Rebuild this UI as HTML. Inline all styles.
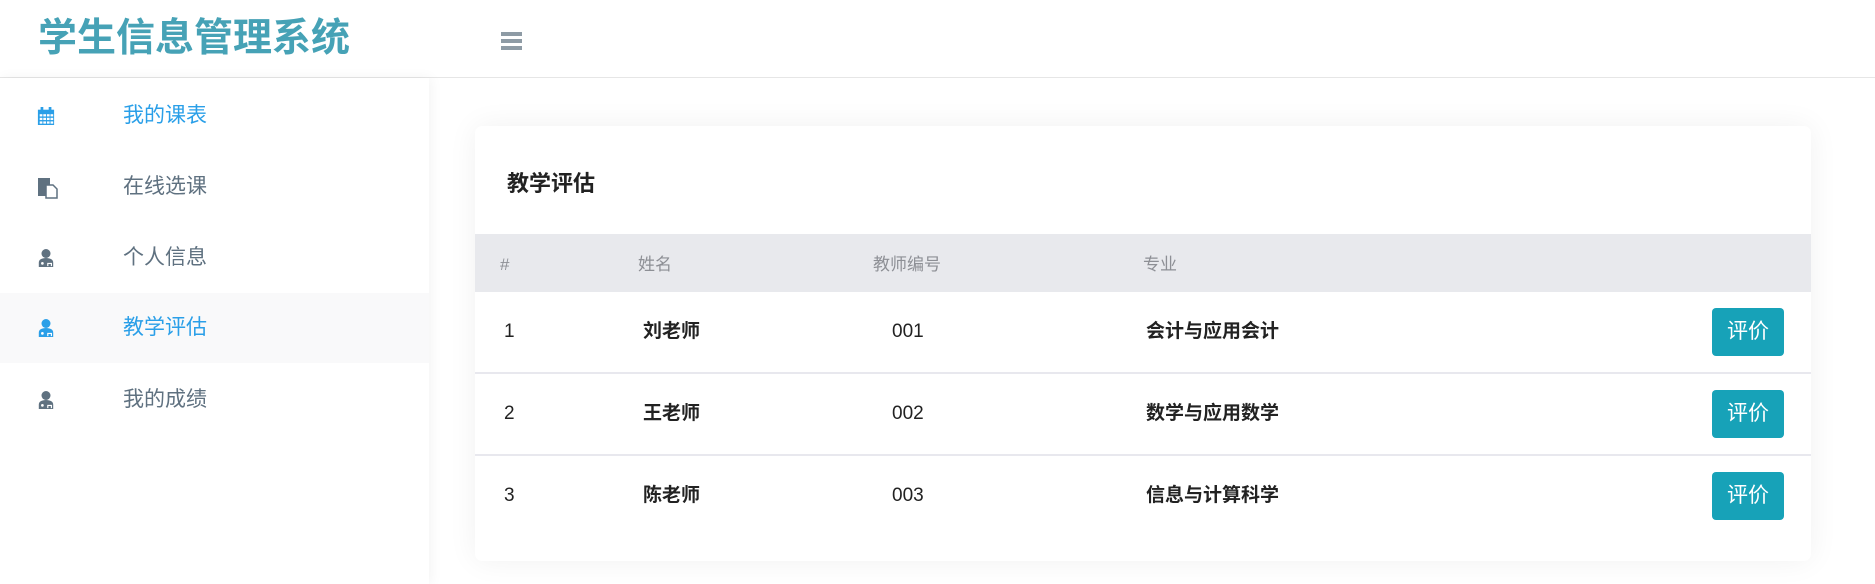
<!DOCTYPE html>
<html><head><meta charset="utf-8"><style>
*{margin:0;padding:0;box-sizing:border-box}
body{width:1875px;height:584px;overflow:hidden;background:#fff;font-family:"Liberation Sans","Noto Sans CJK SC",sans-serif;position:relative}
.hdr{position:absolute;left:0;top:0;width:1875px;height:78px;border-bottom:1px solid #e6e6e6;background:#fff}
.title{position:absolute;left:38px;top:12px;font-size:39px;font-weight:bold;color:#46a2b6;line-height:54px}
.ham{position:absolute;left:501px;top:32px;width:21px}
.ham i{display:block;height:4px;background:#8e9ba5;margin-bottom:3px}
.side{position:absolute;left:0;top:78px;width:429px;height:506px;background:#fff;box-shadow:2px 0 12px rgba(0,0,0,0.05)}
.item{position:absolute;left:0;width:429px;height:70px}
.item.act{background:#f9f9fa}
.item svg{position:absolute;left:37px;top:25px}
.item span{position:absolute;left:123px;top:0;line-height:70px;font-size:21px;color:#5f7180}
.item.blue span{color:#2a9fe8}
.card{position:absolute;left:475px;top:126px;width:1336px;height:435px;background:#fff;border-radius:7px;box-shadow:0 0 30px rgba(0,0,0,0.06)}
.ct{position:absolute;left:32px;top:40px;font-size:22px;font-weight:bold;color:#222}
.th{position:absolute;left:0;top:108px;width:1336px;height:58px;background:#e8e9ed}
.th span{position:absolute;top:2px;line-height:58px;font-size:17px;color:#8d8f95}
.row{position:absolute;left:0;width:1336px;height:82px;border-bottom:2px solid #e8e8ee}
.row span{position:absolute;top:0;line-height:80px;font-size:19px;color:#222}
.row b{position:absolute;top:0;line-height:80px;font-size:19px;color:#222}
.btn{position:absolute;left:1237px;top:16px;width:72px;height:48px;background:#17a2b8;border-radius:4px;color:#fff;font-size:21px;line-height:48px;text-align:center}
</style></head><body>
<div class="hdr">
<div class="title">学生信息管理系统</div>
<div class="ham"><i></i><i></i><i></i></div>
</div>
<div class="side">
<div class="item blue" style="top:3px"><svg width="18" height="20" viewBox="0 0 20 22"><rect x="1" y="4" width="18" height="17" fill="#2a9fe8"/><rect x="4" y="1" width="3" height="5" fill="#2a9fe8"/><rect x="13" y="1" width="3" height="5" fill="#2a9fe8"/><g fill="#fff"><rect x="3" y="9" width="3" height="2.5"/><rect x="7" y="9" width="3" height="2.5"/><rect x="11" y="9" width="3" height="2.5"/><rect x="15" y="9" width="3" height="2.5"/><rect x="3" y="13" width="3" height="2.5"/><rect x="7" y="13" width="3" height="2.5"/><rect x="11" y="13" width="3" height="2.5"/><rect x="15" y="13" width="3" height="2.5"/><rect x="3" y="17" width="3" height="2.5"/><rect x="7" y="17" width="3" height="2.5"/><rect x="11" y="17" width="3" height="2.5"/><rect x="15" y="17" width="3" height="2.5"/></g></svg><span>我的课表</span></div>
<div class="item" style="top:74px"><svg width="22" height="22" viewBox="0 0 22 22"><rect x="1" y="1" width="12" height="18" fill="#5f7180"/><path d="M9 8h7l4 4v9H9z" fill="#fff" stroke="#5f7180" stroke-width="1.5"/></svg><span>在线选课</span></div>
<div class="item" style="top:145px"><svg width="18" height="20" viewBox="0 0 20 22"><circle cx="10" cy="6" r="5" fill="#5f7180"/><path d="M2 21v-5c0-3 3-5 8-5s8 2 8 5v5z" fill="#5f7180"/><circle cx="6" cy="17" r="1.5" fill="#fff"/><path d="M12 20v-3h4v3" stroke="#fff" stroke-width="1.3" fill="none"/></svg><span>个人信息</span></div>
<div class="item act blue" style="top:215px"><svg width="18" height="20" viewBox="0 0 20 22"><circle cx="10" cy="6" r="5" fill="#2a9fe8"/><path d="M2 21v-5c0-3 3-5 8-5s8 2 8 5v5z" fill="#2a9fe8"/><circle cx="6" cy="17" r="1.5" fill="#fff"/><path d="M12 20v-3h4v3" stroke="#fff" stroke-width="1.3" fill="none"/></svg><span>教学评估</span></div>
<div class="item" style="top:287px"><svg width="18" height="20" viewBox="0 0 20 22"><circle cx="10" cy="6" r="5" fill="#5f7180"/><path d="M2 21v-5c0-3 3-5 8-5s8 2 8 5v5z" fill="#5f7180"/><circle cx="6" cy="17" r="1.5" fill="#fff"/><path d="M12 20v-3h4v3" stroke="#fff" stroke-width="1.3" fill="none"/></svg><span>我的成绩</span></div>
</div>
<div class="card">
<div class="ct">教学评估</div>
<div class="th"><span style="left:25px">#</span><span style="left:163px">姓名</span><span style="left:398px">教师编号</span><span style="left:668px">专业</span></div>
<div class="row" style="top:166px"><span style="left:29px">1</span><b style="left:168px">刘老师</b><span style="left:417px">001</span><b style="left:671px">会计与应用会计</b><div class="btn">评价</div></div>
<div class="row" style="top:248px"><span style="left:29px">2</span><b style="left:168px">王老师</b><span style="left:417px">002</span><b style="left:671px">数学与应用数学</b><div class="btn">评价</div></div>
<div class="row" style="top:330px;border-bottom:none"><span style="left:29px">3</span><b style="left:168px">陈老师</b><span style="left:417px">003</span><b style="left:671px">信息与计算科学</b><div class="btn">评价</div></div>
</div>
</body></html>
